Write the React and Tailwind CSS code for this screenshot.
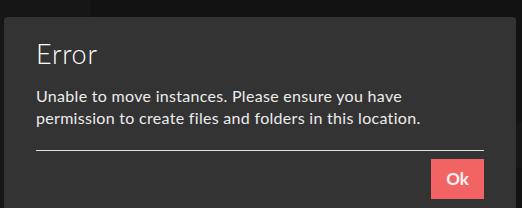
import React from "react";

export default function App() {
  return (
    <div className="relative w-[522px] h-[208px] overflow-hidden bg-[#121212]" style={{ fontFamily: "Lato, 'Open Sans', sans-serif" }}>
      <div className="absolute left-0 top-0 w-[90px] h-[208px] bg-[#161616]" />
      <div className="absolute right-0 top-[122px] w-[10px] h-[46px] bg-[#161616]" />
      <div className="relative ml-[4px] mt-[17px] w-[512px] h-[200px] rounded-t-[4px] bg-[#333333] px-8 pt-[21px]">
        <h1 className="text-[27px] leading-[32px] font-light tracking-[0.7px] text-white">Error</h1>
        <p className="mt-[15px] text-[16px] leading-[22px] tracking-[0.3px] text-[#ececec]">
          Unable to move instances. Please ensure you have
          <br />
          permission to create files and folders in this location.
        </p>
        <div className="mt-[21px] h-px bg-[#e0e0e0]" />
        <div className="mt-[8px] flex justify-end">
          <button className="w-[53px] h-[40px] bg-[#f26464] text-[#fff4f4] text-[17px] font-bold">Ok</button>
        </div>
      </div>
    </div>
  );
}
